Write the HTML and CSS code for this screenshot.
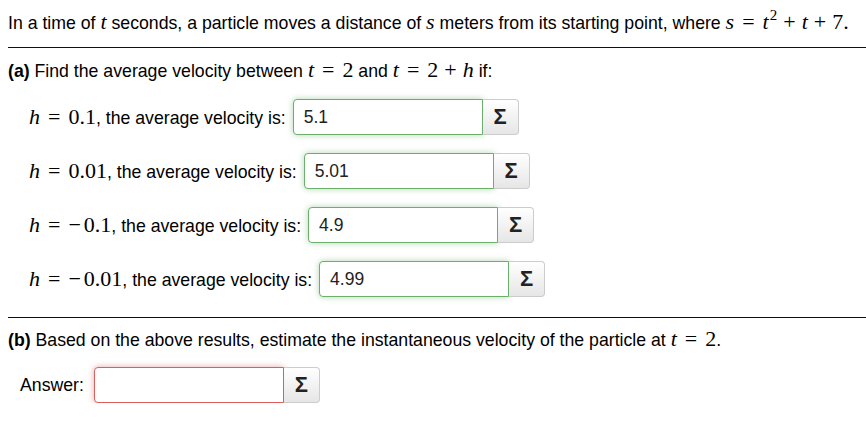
FILE: index.html
```html
<!DOCTYPE html>
<html>
<head>
<meta charset="utf-8">
<link rel="stylesheet" href="styles.css">
</head>
<body>
<div class="problem">
  <p class="intro">In a time of <span class="m"><i>t</i></span> seconds, a particle moves a distance of <span class="m"><i>s</i></span> meters from its starting point, where <span class="m"><i>s</i><span class="rel">=</span><i>t</i><sup>2</sup><span class="bin">+</span><i>t</i><span class="bin">+</span>7.</span></p>
  <div class="rule"></div>
  <p class="part"><b>(a)</b> Find the average velocity between <span class="m"><i>t</i><span class="rel">=</span>2</span> and <span class="m"><i>t</i><span class="rel">=</span>2<span class="bin">+</span><i>h</i></span> if:</p>
  <div class="rows">
    <div class="row">
      <span class="label"><span class="m"><i>h</i><span class="rel">=</span>0.1</span>, the average velocity is:</span>
      <span class="ans"><input class="field correct" value="5.1"><span class="sigma">Σ</span></span>
    </div>
    <div class="row">
      <span class="label"><span class="m"><i>h</i><span class="rel">=</span>0.01</span>, the average velocity is:</span>
      <span class="ans"><input class="field correct" value="5.01"><span class="sigma">Σ</span></span>
    </div>
    <div class="row">
      <span class="label"><span class="m"><i>h</i><span class="rel">=</span><span class="neg">−</span>0.1</span>, the average velocity is:</span>
      <span class="ans"><input class="field correct" value="4.9"><span class="sigma">Σ</span></span>
    </div>
    <div class="row">
      <span class="label"><span class="m"><i>h</i><span class="rel">=</span><span class="neg">−</span>0.01</span>, the average velocity is:</span>
      <span class="ans"><input class="field correct" value="4.99"><span class="sigma">Σ</span></span>
    </div>
  </div>
  <div class="rule rule-b"></div>
  <p class="part"><b>(b)</b> Based on the above results, estimate the instantaneous velocity of the particle at <span class="m"><i>t</i><span class="rel">=</span>2</span>.</p>
  <div class="row answer-row">
    <span class="label">Answer:</span>
    <span class="ans"><input class="field wrong" value=""><span class="sigma">Σ</span></span>
  </div>
</div>
</body>
</html>
```

FILE: styles.css
```css
html, body {
  margin: 0;
  padding: 0;
  background: #fff;
}
body {
  padding: 8px 0 0 8px;
  font-family: "Liberation Sans", Arial, sans-serif;
  font-size: 17.7px;
  color: #000;
  overflow: hidden;
}
.problem {
  display: flex;
  flex-direction: column;
}
p {
  margin: 0;
  line-height: 20px;
  height: 20px;
  white-space: nowrap;
}
.m {
  font-family: "Liberation Serif", "Times New Roman", serif;
  font-size: 22px;
  line-height: 1;
}
.m i {
  font-style: italic;
}
.m sup {
  font-size: 15px;
  line-height: 1;
  vertical-align: 9px;
  margin-left: 1px;
}
.rel {
  margin: 0 8px;
}
.bin {
  margin: 0 6px;
}
.neg {
  margin-right: 3px;
}
.rule {
  height: 1px;
  background: #111;
  margin: 19px 0 11px 0;
  margin-right: -8px;
}
.rule-b {
  margin: 20px -8px 10px 0;
}
.rows {
  display: flex;
  flex-direction: column;
  gap: 18px;
  margin-top: 20px;
  padding-left: 21px;
}
.row {
  display: flex;
  align-items: center;
  height: 36px;
  gap: 7px;
  white-space: nowrap;
}
.answer-row {
  margin-top: 19px;
  padding-left: 12px;
  gap: 10px;
}
.ans {
  display: flex;
  height: 36px;
}
.field {
  box-sizing: border-box;
  width: 190px;
  height: 36px;
  margin: 0;
  padding: 0 10px;
  font-family: "Liberation Sans", Arial, sans-serif;
  font-size: 17.5px;
  color: #222;
  background: #fff;
  border: 1px solid #ccc;
  border-radius: 4px 0 0 4px;
  outline: none;
}
.correct {
  border-color: #6aaf6a;
  box-shadow: 0 0 6px rgba(81, 163, 81, 0.45);
}
.wrong {
  border-color: #d9605f;
  box-shadow: 0 0 6px rgba(210, 80, 80, 0.5);
}
.sigma {
  box-sizing: border-box;
  width: 36px;
  height: 36px;
  display: flex;
  align-items: center;
  justify-content: center;
  font-family: "Liberation Sans", Arial, sans-serif;
  font-weight: bold;
  font-size: 22px;
  color: #222;
  background: linear-gradient(#ffffff, #e6e6e6);
  border: 1px solid #ccc;
  border-left: none;
  border-radius: 0 4px 4px 0;
}
```
